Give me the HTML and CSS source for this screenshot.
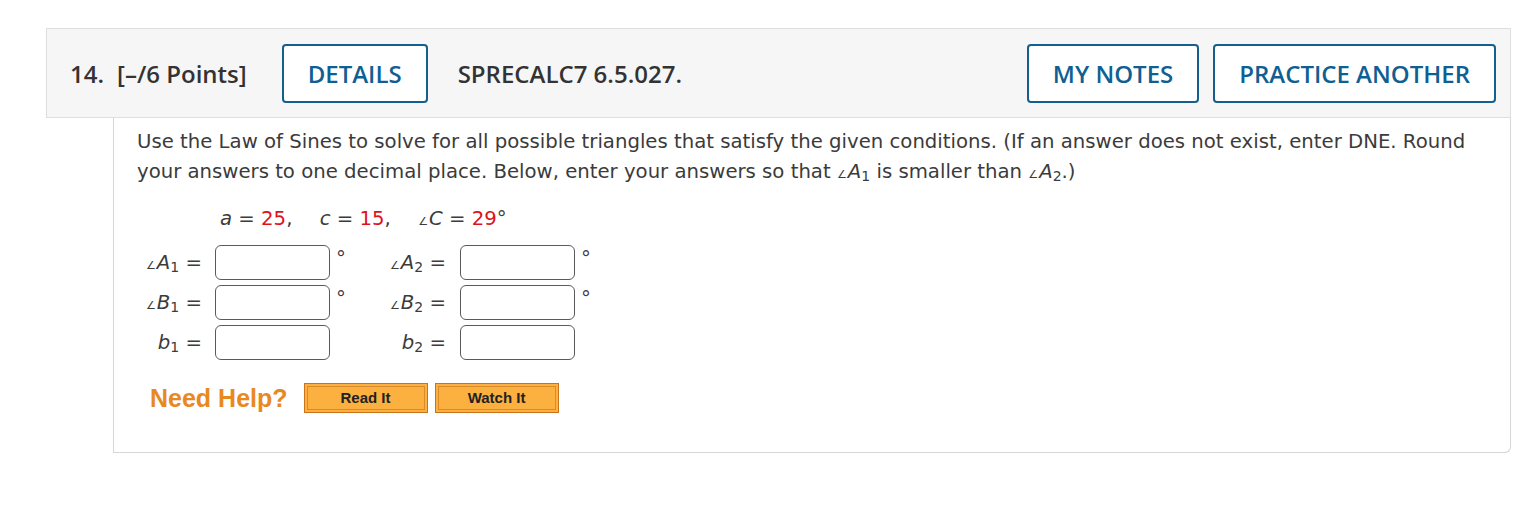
FILE: index.html
```html
<!DOCTYPE html>
<html lang="en">
<head>
    <meta charset="UTF-8">
    <title>Question 14</title>
    <link rel="stylesheet" href="styles.css">
</head>
<body>
    <div class="question">
        <div class="q-header">
            <span class="q-number">14.</span>
            <span class="q-points">[&ndash;/6 Points]</span>
            <a href="#" class="q-btn">DETAILS</a>
            <span class="q-code">SPRECALC7 6.5.027.</span>
            <div class="q-actions">
                <a href="#" class="q-btn">MY NOTES</a>
                <a href="#" class="q-btn">PRACTICE ANOTHER</a>
            </div>
        </div>

        <div class="q-body">
            <p class="prompt">Use the Law of Sines to solve for all possible triangles that satisfy the given conditions. (If an answer does not exist, enter DNE. Round your answers to one decimal place. Below, enter your answers so that <span class="ang">&ang;</span><i>A</i><sub>1</sub> is smaller than <span class="ang">&ang;</span><i>A</i><sub>2</sub>.)</p>

            <p class="given">
                <span class="term"><i>a</i> = <span class="val">25</span>,</span>
                <span class="term"><i>c</i> = <span class="val">15</span>,</span>
                <span class="term"><span class="ang">&ang;</span><i>C</i> = <span class="val">29</span>&deg;</span>
            </p>

            <div class="answers">
                <label class="lbl"><span class="ang">&ang;</span><i>A</i><sub>1</sub> =</label>
                <input type="text" class="ans">
                <span class="deg">&deg;</span>
                <label class="lbl lbl-2"><span class="ang">&ang;</span><i>A</i><sub>2</sub> =</label>
                <input type="text" class="ans">
                <span class="deg">&deg;</span>

                <label class="lbl"><span class="ang">&ang;</span><i>B</i><sub>1</sub> =</label>
                <input type="text" class="ans">
                <span class="deg">&deg;</span>
                <label class="lbl lbl-2"><span class="ang">&ang;</span><i>B</i><sub>2</sub> =</label>
                <input type="text" class="ans">
                <span class="deg">&deg;</span>

                <label class="lbl"><i>b</i><sub>1</sub> =</label>
                <input type="text" class="ans">
                <span class="deg"></span>
                <label class="lbl lbl-2"><i>b</i><sub>2</sub> =</label>
                <input type="text" class="ans">
                <span class="deg"></span>
            </div>

            <div class="help">
                <span class="help-title">Need Help?</span>
                <button class="help-btn"><span>Read It</span></button>
                <button class="help-btn"><span>Watch It</span></button>
            </div>
        </div>
    </div>
</body>
</html>
```

FILE: styles.css
```css
body {
    margin: 0;
    background-color: #fff;
    color: #333;
    font-family: "DejaVu Sans", Verdana, sans-serif;
}
.question {
    padding: 28px 25px 0 46px;
}
.q-header {
    display: flex;
    align-items: center;
    height: 90px;
    box-sizing: border-box;
    padding: 0 14px 0 23px;
    background-color: #f6f6f6;
    border: 1px solid #dedede;
    font-family: "Open Sans", sans-serif;
    font-weight: 600;
    font-size: 24px;
    color: #333;
}
.q-number {
    margin-right: 13px;
}
.q-points {
    margin-right: 35px;
}
.q-code {
    margin-left: 30px;
}
.q-actions {
    display: flex;
    gap: 14px;
    margin-left: auto;
}
.q-btn {
    display: inline-flex;
    align-items: center;
    height: 59px;
    box-sizing: border-box;
    padding: 0 24px;
    border: 2px solid #155f8e;
    border-radius: 4px;
    background-color: #fff;
    color: #0f5f93;
    text-decoration: none;
    font-size: 24px;
    font-weight: 600;
}
.q-body {
    margin-left: 67px;
    height: 335px;
    box-sizing: border-box;
    padding: 9px 23px 0 23px;
    border: 1px solid #d6d6d6;
    border-top: none;
    border-radius: 0 0 6px 0;
    font-size: 19.7px;
    color: #3b3b3b;
}
.prompt {
    margin: 0;
    line-height: 30px;
}
.ang {
    font-size: 11px;
    font-style: normal;
    margin-right: 1px;
}
sub {
    font-size: 14px;
    vertical-align: -3px;
    line-height: 0;
}
.given {
    margin: 14px 0 0 83px;
    line-height: 30px;
}
.term {
    margin-right: 21px;
}
.val {
    color: #e0111b;
}
.answers {
    display: grid;
    grid-template-columns: 78px 115px 48px 82px 115px 40px;
    grid-auto-rows: 35px;
    row-gap: 5px;
    margin-top: 8px;
}
.lbl {
    display: block;
    padding-right: 13px;
    text-align: right;
    line-height: 35px;
    white-space: nowrap;
}
.lbl-2 {
    padding-right: 14px;
}
.ans {
    height: 35px;
    box-sizing: border-box;
    margin: 0;
    border: 1.5px solid #5a5a5a;
    border-radius: 6px;
    background-color: #fff;
}
.deg {
    padding: 3px 0 0 6px;
    line-height: 22px;
}
.help {
    display: flex;
    align-items: center;
    gap: 7px;
    margin: 23px 0 0 13px;
}
.help-title {
    margin-right: 9px;
    font-family: "Liberation Sans", Arial, sans-serif;
    font-weight: bold;
    font-size: 25px;
    color: #e8891f;
}
.help-btn {
    width: 124px;
    height: 30px;
    padding: 2px;
    border: 1px solid #c9741d;
    background-color: #fcb040;
    cursor: pointer;
}
.help-btn span {
    display: block;
    height: 100%;
    box-sizing: border-box;
    border: 1px solid #d98a2c;
    font-family: "Liberation Sans", Arial, sans-serif;
    font-weight: bold;
    font-size: 15px;
    line-height: 22px;
    color: #222;
}
```
